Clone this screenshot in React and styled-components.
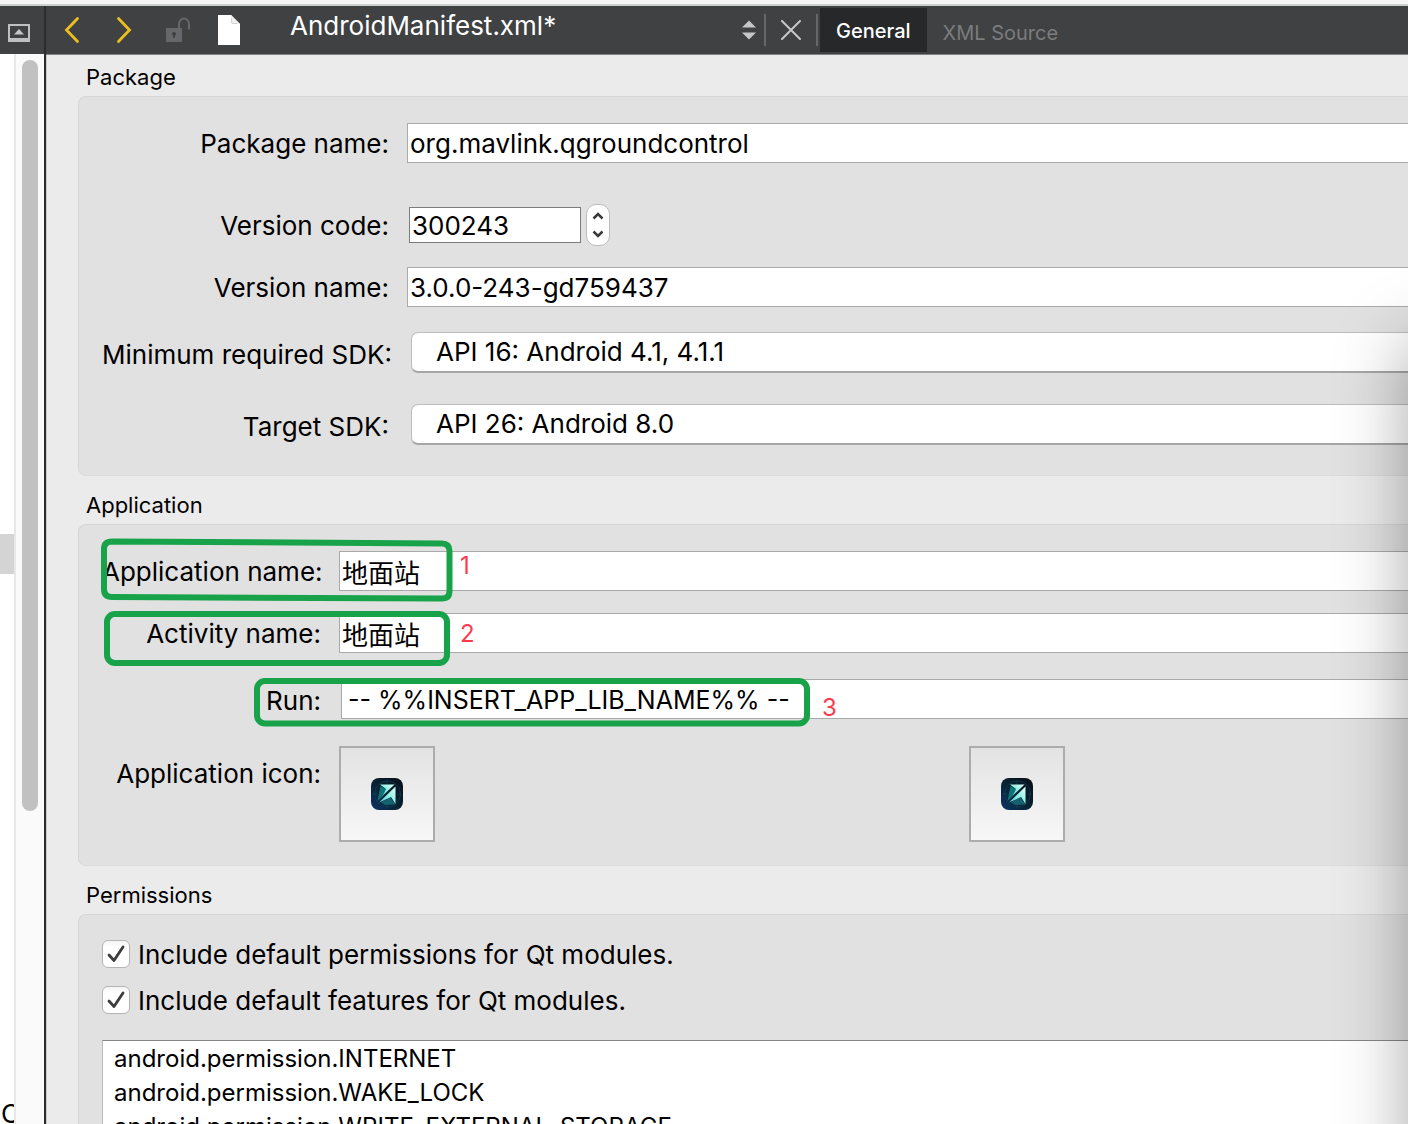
import React from "react";
import styled, { createGlobalStyle } from "styled-components";

const GlobalStyle = createGlobalStyle`
  *, *::before, *::after { box-sizing: border-box; }
  body {
    margin: 0;
    background: #ebebeb;
    color: #000;
    font-family: Inter, "Noto Sans CJK SC", sans-serif;
    font-size: 26px;
    line-height: 32px;
  }
  button, input, select { font: inherit; color: inherit; margin: 0; }
`;

const Window = styled.div`
  position: relative;
  display: flex;
  flex-direction: column;
  height: 100vh;
  overflow: hidden;
`;

const TopEdge = styled.div`
  flex: none;
  height: 6px;
  background: #f5f5f5;
  border-bottom: 2px solid #ccd0cc;
`;

const Columns = styled.div`
  display: flex;
  flex: 1;
  min-height: 0;
`;

const Sidebar = styled.aside`
  display: flex;
  flex-direction: column;
  flex: none;
  width: 46px;
  border-right: 2px solid #2b2c2d;
  background: #fff;
`;

const SidebarHeader = styled.div`
  display: flex;
  justify-content: flex-end;
  align-items: center;
  flex: none;
  height: 48px;
  padding: 6px 13px 0 0;
  background: #404142;
`;

const IconButton = styled.button`
  display: flex;
  flex: none;
  align-items: center;
  justify-content: center;
  width: ${(p) => p.$width || 24}px;
  height: 32px;
  padding: 0;
  border: 0;
  background: none;
`;

const SidebarBody = styled.div`
  display: flex;
  flex: 1;
  min-height: 0;
`;

const Tree = styled.div`
  flex: none;
  width: 16px;
  padding-top: 480px;
  overflow: hidden;
  border-right: 2px solid #e8e8e8;
`;

const TreeRow = styled.div`
  height: 40px;
  padding-left: 1px;
  line-height: 40px;
  background: ${(p) => (p.$selected ? "#d4d4d4" : "transparent")};
  margin-top: ${(p) => p.$before || 0}px;
`;

const ScrollTrack = styled.div`
  flex: 1;
  padding: 6px;
  background: #fafafa;
`;

const ScrollThumb = styled.div`
  height: 71%;
  border-radius: 8px;
  background: #c1c1c1;
`;

const Editor = styled.main`
  display: flex;
  flex-direction: column;
  flex: 1;
  min-width: 0;
`;

const Toolbar = styled.header`
  display: flex;
  align-items: center;
  flex: none;
  height: 49px;
  padding-left: 14px;
  border-bottom: 1px solid #828384;
  background: #404142;
`;

const IconGroup = styled.div`
  display: flex;
  align-items: center;
  gap: 28px;
  width: 226px;
  flex: none;
`;

const FilePicker = styled.label`
  display: flex;
  align-items: center;
  width: 480px;
  height: 32px;
  padding-right: 8px;
  border-right: 2px solid #666768;
`;

const FileSelect = styled.select`
  flex: 1;
  min-width: 0;
  height: 40px;
  padding: 0 0 8px 4px;
  border: 0;
  appearance: none;
  background: transparent;
  color: #fff;
`;

const CloseSlot = styled.div`
  display: flex;
  justify-content: center;
  width: 52px;
  height: 32px;
  margin-right: 2px;
  border-right: 2px solid #666768;
`;

const Tab = styled.button`
  height: 44px;
  padding: ${(p) => (p.$active ? "2px 16px 0" : "6px 16px 0")};
  border: 0;
  background: ${(p) => (p.$active ? "#262829" : "transparent")};
  color: ${(p) => (p.$active ? "#fff" : "#7b7c7d")};
  font-size: 20px;
  font-weight: ${(p) => (p.$active ? 500 : 400)};
`;

const Form = styled.form`
  flex: 1;
  min-height: 0;
  overflow: hidden;
  padding: 3px 0 0 31px;
  border-left: 1px solid #c9c9c9;
`;

const Section = styled.section`
  margin-bottom: 10px;
`;

const SectionTitle = styled.h2`
  margin: 0;
  padding-left: 8px;
  font-size: 22px;
  font-weight: 400;
  line-height: 38px;
`;

const Panel = styled.div`
  position: relative;
  padding: ${(p) => p.$pad};
  border: 1px solid #d6d6d6;
  border-right: 0;
  border-bottom-color: #dcdcdc;
  border-radius: 8px 0 0 8px;
  background: #e1e1e1;
`;

const Row = styled.div`
  display: flex;
  align-items: ${(p) => (p.$top ? "flex-start" : "center")};
  margin-top: ${(p) => p.$before || 0}px;
`;

const Label = styled.label`
  flex: none;
  width: ${(p) => p.$width}px;
  margin-right: 18px;
  padding-top: ${(p) => p.$drop || 2}px;
  text-align: right;
  white-space: nowrap;
`;

const TextField = styled.input`
  flex: 1;
  min-width: 0;
  height: 40px;
  padding: 0 0 0 2px;
  border: 1px solid #a9a9a9;
  border-right: 0;
  border-radius: 0;
  background: #fff;
  outline: 0;
`;

const LibraryField = styled(TextField)`
  margin-left: 2px;
  padding: 2px 0 0 6px;
  font-size: 25px;
`;

const SpinBox = styled.div`
  display: flex;
  align-items: center;
  gap: 5px;
  height: 42px;
  margin-left: 2px;
`;

const SpinInput = styled.input`
  width: 172px;
  height: 36px;
  padding: 0 2px;
  border: 1px solid #7c7c7c;
  background: #fff;
  appearance: textfield;
  outline: 0;
`;

const Stepper = styled.div`
  display: flex;
  flex-direction: column;
  width: 24px;
  height: 42px;
  padding: 2px 0;
  overflow: hidden;
  border: 1px solid #bcbcbc;
  border-radius: 10px;
  background: #fff;
`;

const StepButton = styled.button`
  display: flex;
  flex: 1;
  align-items: center;
  justify-content: center;
  padding: 0;
  border: 0;
  background: none;
`;

const Dropdown = styled.select`
  flex: 1;
  min-width: 0;
  height: 41px;
  margin-left: 4px;
  padding: 0 0 0 24px;
  border: 1px solid #bdbdbd;
  border-right: 0;
  border-bottom: 2px solid #a6a6a6;
  border-radius: 7px 0 0 7px;
  appearance: none;
  background: #fff;
`;

const IconSlots = styled.div`
  display: grid;
  grid-template-columns: 630px 1fr;
  flex: 1;
`;

const AppIconButton = styled.button`
  display: flex;
  align-items: center;
  justify-content: center;
  width: 96px;
  height: 96px;
  padding: 0;
  border: 2px solid #acacac;
  background: linear-gradient(#e3e3e3, #f7f7f7);
`;

const Marks = styled.svg`
  position: absolute;
  top: 0;
  left: 0;
  width: 760px;
  height: 220px;
  pointer-events: none;
`;

const MarkNumber = styled.span`
  position: absolute;
  left: ${(p) => p.$x}px;
  top: ${(p) => p.$y}px;
  color: #fc3b4c;
  font-size: 24px;
  line-height: 32px;
`;

const CheckRow = styled.label`
  display: flex;
  align-items: center;
  gap: 8px;
  height: 46px;
  white-space: nowrap;
`;

const CheckFrame = styled.span`
  display: grid;
  width: 28px;
  height: 28px;
  > * { grid-area: 1 / 1; }
  > svg { pointer-events: none; z-index: 1; }
`;

const CheckText = styled.span`
  padding-top: 2px;
`;

const CheckInput = styled.input`
  width: 28px;
  height: 28px;
  appearance: none;
  border: 1px solid #b4b4b4;
  border-radius: 6px;
  background: linear-gradient(#f4f4f4, #fff 6px);
`;

const PermissionList = styled.ul`
  height: 200px;
  margin: 17px 0 0;
  padding: 1px 0 0 11px;
  border: 1px solid #bcbcbc;
  border-top-color: #858585;
  border-right: 0;
  background: #fff;
  list-style: none;
  font-size: 24px;
  line-height: 34px;
`;

const WindowShadow = styled.div`
  position: absolute;
  top: 340px;
  bottom: -100px;
  left: 100%;
  width: 100px;
  box-shadow: 0 0 70px rgba(0, 0, 0, 0.34);
  pointer-events: none;
`;

function Chevron({ flip }) {
  return (
    <svg width="16" height="28" viewBox="0 0 16 28">
      <path
        d={flip ? "M2.5 2.5 L13.5 14 L2.5 25.5" : "M13.5 2.5 L2.5 14 L13.5 25.5"}
        fill="none" stroke="#ecbf1e" strokeWidth="2.8" strokeLinecap="round"
      />
    </svg>
  );
}

function LockIcon() {
  return (
    <svg width="26" height="26" viewBox="0 0 26 26">
      <rect x="2" y="11" width="16" height="14" fill="#66676b" />
      <path d="M15 11 V7 A5 5.5 0 0 1 25 7 V12.5" fill="none" stroke="#66676b" strokeWidth="2" />
      <circle cx="10" cy="17" r="2" fill="#404142" />
      <path d="M9.200 17 h1.600 v4 h-1.600z" fill="#404142" />
    </svg>
  );
}

function FileIcon() {
  return (
    <svg width="22" height="30" viewBox="0 0 22 30">
      <path d="M0 0 H13 L22 9 V30 H0 Z" fill="#fff" />
      <path d="M13 0 L22 9 H15.5 Q13 9 13 6.500 Z" fill="#f0f0f0" />
      <path d="M13.5 3 V7 Q13.5 8.5 15 8.5 H19" fill="none" stroke="#ccc" strokeWidth=".8" />
    </svg>
  );
}

function AppLogo({ id }) {
  return (
    <svg width="32" height="32" viewBox="0 0 32 32">
      <defs>
        <linearGradient id={`${id}-bg`} x1="0" y1="1" x2="1" y2="0">
          <stop offset="0" stopColor="#0b3568" />
          <stop offset=".5" stopColor="#08222f" />
          <stop offset="1" stopColor="#080e18" />
        </linearGradient>
        <linearGradient id={`${id}-arrow`} x1="0" y1="1" x2="1" y2="0">
          <stop offset="0" stopColor="#4cc4c6" />
          <stop offset=".5" stopColor="#8df0e6" />
          <stop offset="1" stopColor="#e4fffb" />
        </linearGradient>
      </defs>
      <rect width="32" height="32" rx="8" fill={`url(#${id}-bg)`} />
      <circle cx="16.5" cy="16" r="13" fill="none" stroke="#123a50" strokeWidth=".8" />
      <path d="M16 2v4M16 27v3M2 16h4M27 16h3" stroke="#164a64" strokeWidth=".6" />
      <path d="M9.5 8 L15 11 L12 18 L6.500 23 Z" fill="#0f7478" />
      <path d="M9 6.500 H23.5 L11.5 18 L15 11 Z" fill={`url(#${id}-arrow)`} />
      <path d="M10 24.5 L19 19 L24.5 26.5 L14 27 Z" fill="#17606f" />
      <path d="M24.5 8.500 V26 L20 19 L8 24.5 Z" fill={`url(#${id}-arrow)`} />
    </svg>
  );
}

function Check({ children }) {
  return (
    <CheckRow>
      <CheckFrame>
        <CheckInput type="checkbox" defaultChecked />
        <svg width="28" height="28" viewBox="0 0 28 28">
          <path d="M7 15 L12 20.5 L21 7" fill="none" stroke="#3d3d3d" strokeWidth="2.8" strokeLinecap="round" strokeLinejoin="round" />
        </svg>
      </CheckFrame>
      <CheckText>{children}</CheckText>
    </CheckRow>
  );
}

const permissions = [
  "android.permission.INTERNET",
  "android.permission.WAKE_LOCK",
  "android.permission.WRITE_EXTERNAL_STORAGE",
];

export default function App() {
  return (
    <Window>
      <GlobalStyle />
      <TopEdge />
      <Columns>
        <Sidebar>
          <SidebarHeader>
            <IconButton aria-label="Collapse pane">
              <svg width="22" height="18" viewBox="0 0 22 18">
                <rect x="1" y="1" width="20" height="16" fill="none" stroke="#bfc0c1" strokeWidth="2" />
                <path d="M1 15.5h20" stroke="#bfc0c1" strokeWidth="3" />
                <path d="M6 10.5 L11 5 L16 10.5Z" fill="#c4c5c6" />
              </svg>
            </IconButton>
          </SidebarHeader>
          <SidebarBody>
            <Tree>
              <TreeRow $selected />
              <TreeRow $before={520}>C</TreeRow>
            </Tree>
            <ScrollTrack>
              <ScrollThumb />
            </ScrollTrack>
          </SidebarBody>
        </Sidebar>
        <Editor>
          <Toolbar>
            <IconGroup>
              <IconButton aria-label="Go back"><Chevron /></IconButton>
              <IconButton aria-label="Go forward"><Chevron flip /></IconButton>
              <IconButton aria-label="Make writable" $width={26}><LockIcon /></IconButton>
              <FileIcon />
            </IconGroup>
            <FilePicker>
              <FileSelect aria-label="Open document" defaultValue="AndroidManifest.xml*">
                <option>AndroidManifest.xml*</option>
              </FileSelect>
              <svg width="14" height="20" viewBox="0 0 14 20">
                <path d="M0 7.500 L7 0.5 L14 7.500Z M0 12.5 L7 19.5 L14 12.5Z" fill="#c6c7c8" />
              </svg>
            </FilePicker>
            <CloseSlot>
              <IconButton aria-label="Close document">
                <svg width="20" height="20" viewBox="0 0 20 20">
                  <path d="M1 1 L19 19 M19 1 L1 19" stroke="#c6c7c8" strokeWidth="2" strokeLinecap="round" />
                </svg>
              </IconButton>
            </CloseSlot>
            <Tab $active>General</Tab>
            <Tab>XML Source</Tab>
          </Toolbar>
          <Form>
            <Section>
              <SectionTitle>Package</SectionTitle>
              <Panel $pad="26px 0 30px 23px">
                <Row>
                  <Label $width={287} htmlFor="package">Package name:</Label>
                  <TextField id="package" defaultValue="org.mavlink.qgroundcontrol" />
                </Row>
                <Row $before={41}>
                  <Label $width={287} htmlFor="code">Version code:</Label>
                  <SpinBox>
                    <SpinInput id="code" type="text" inputMode="numeric" defaultValue="300243" />
                    <Stepper>
                      <StepButton type="button" aria-label="Increase">
                        <svg width="12" height="8" viewBox="0 0 12 8"><path d="M1.5 6.500 L6 2 L10.5 6.500" fill="none" stroke="#3a3a3a" strokeWidth="2.5" /></svg>
                      </StepButton>
                      <StepButton type="button" aria-label="Decrease">
                        <svg width="12" height="8" viewBox="0 0 12 8"><path d="M1.5 1.5 L6 6 L10.5 1.5" fill="none" stroke="#3a3a3a" strokeWidth="2.5" /></svg>
                      </StepButton>
                    </Stepper>
                  </SpinBox>
                </Row>
                <Row $before={21}>
                  <Label $width={287} htmlFor="version">Version name:</Label>
                  <TextField id="version" defaultValue="3.0.0-243-gd759437" />
                </Row>
                <Row $before={25}>
                  <Label $width={287} $drop={4} htmlFor="min">Minimum required SDK:</Label>
                  <Dropdown id="min"><option>API 16: Android 4.1, 4.1.1</option></Dropdown>
                </Row>
                <Row $before={31}>
                  <Label $width={287} $drop={4} htmlFor="target">Target SDK:</Label>
                  <Dropdown id="target"><option>API 26: Android 8.0</option></Dropdown>
                </Row>
              </Panel>
            </Section>
            <Section>
              <SectionTitle>Application</SectionTitle>
              <Panel $pad="26px 0 23px 23px">
                <Row>
                  <Label $width={219} htmlFor="app">Application name:</Label>
                  <TextField id="app" defaultValue="地面站" />
                </Row>
                <Row $before={22}>
                  <Label $width={219} htmlFor="activity">Activity name:</Label>
                  <TextField id="activity" defaultValue="地面站" />
                </Row>
                <Row $before={26}>
                  <Label $width={219} $drop={4} htmlFor="run">Run:</Label>
                  <LibraryField id="run" defaultValue="-- %%INSERT_APP_LIB_NAME%% --" />
                </Row>
                <Row $before={27} $top>
                  <Label as="span" $width={219} $drop={12}>Application icon:</Label>
                  <IconSlots>
                    <AppIconButton type="button" aria-label="Low DPI icon"><AppLogo id="low" /></AppIconButton>
                    <AppIconButton type="button" aria-label="Medium DPI icon"><AppLogo id="medium" /></AppIconButton>
                  </IconSlots>
                </Row>
                <Marks viewBox="79 525 760 220" fill="none" stroke="#18a34a" strokeWidth="6">
                  <path d="M112 541.5 L442 543.5 Q449.5 543.5 449.5 551 V591 Q449.5 598.5 442 598.5 L112 597 Q104 597 104 589 V549 Q104 541.5 112 541.5Z" />
                  <rect x="107" y="614" width="340" height="49" rx="8" />
                  <rect x="257" y="681" width="550" height="42.5" rx="8" />
                </Marks>
                <MarkNumber $x={381} $y={25}>1</MarkNumber>
                <MarkNumber $x={381} $y={93}>2</MarkNumber>
                <MarkNumber $x={743} $y={167}>3</MarkNumber>
              </Panel>
            </Section>
            <Section>
              <SectionTitle>Permissions</SectionTitle>
              <Panel $pad="16px 0 24px 23px">
                <Check>Include default permissions for Qt modules.</Check>
                <Check>Include default features for Qt modules.</Check>
                <PermissionList>
                  {permissions.map((name) => <li key={name}>{name}</li>)}
                </PermissionList>
              </Panel>
            </Section>
          </Form>
        </Editor>
      </Columns>
      <WindowShadow />
    </Window>
  );
}
